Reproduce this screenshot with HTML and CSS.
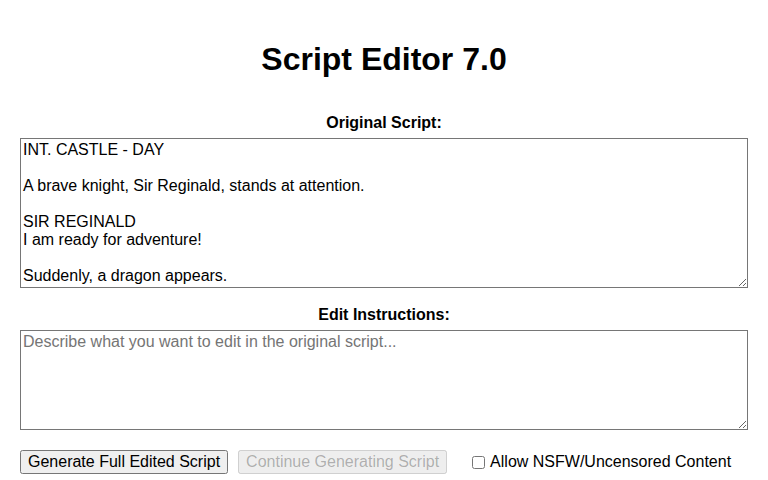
FILE: index.html
```html
<!DOCTYPE html>
<html lang="en">
<head>
<meta charset="utf-8">
<title>Script Editor 7.0</title>
<link rel="stylesheet" href="styles.css">
</head>
<body>
<h1 class="title">Script Editor 7.0</h1>
<div class="field">
  <label class="field-label" for="original">Original Script:</label>
  <textarea id="original" class="box box-original">INT. CASTLE - DAY

A brave knight, Sir Reginald, stands at attention.

SIR REGINALD
I am ready for adventure!

Suddenly, a dragon appears.</textarea>
</div>
<div class="field">
  <label class="field-label" for="instructions">Edit Instructions:</label>
  <textarea id="instructions" class="box box-instructions" placeholder="Describe what you want to edit in the original script..."></textarea>
</div>
<div class="actions">
  <button class="btn" type="button">Generate Full Edited Script</button>
  <button class="btn" type="button" disabled>Continue Generating Script</button>
  <label class="check"><input type="checkbox" class="check-box"> Allow NSFW/Uncensored Content</label>
</div>
</body>
</html>
```
FILE: styles.css
```css
html, body {
  background: #ffffff;
}
body {
  margin: 0;
  padding: 20px;
  font-family: "Liberation Sans", Arial, sans-serif;
  font-size: 16px;
  color: #000;
}
.title {
  font-size: 32px;
  font-weight: bold;
  text-align: center;
  margin: 21px 0 36px;
}
.field {
  margin-bottom: 18px;
}
.field-label {
  display: block;
  text-align: center;
  font-weight: bold;
  margin-bottom: 6px;
}
.box {
  display: block;
  width: 100%;
  box-sizing: border-box;
  margin: 0;
  padding: 2px;
  border: 1px solid #767676;
  font-family: "Liberation Sans", Arial, sans-serif;
  font-size: 16px;
  line-height: 18px;
  color: #000;
  overflow: hidden;
}
.box-original {
  height: 150px;
}
.box-instructions {
  height: 100px;
}
.box::placeholder {
  color: #757575;
}
.actions {
  display: flex;
  align-items: center;
  margin-top: 20px;
}
.btn {
  font-family: "Liberation Sans", Arial, sans-serif;
  font-size: 16px;
  margin: 0 10px 0 0;
  padding: 1px 6px;
}
.check {
  display: flex;
  align-items: center;
  margin-left: 15px;
}
.check-box {
  margin: 0 5px 0 0;
  width: 13px;
  height: 13px;
}
```
